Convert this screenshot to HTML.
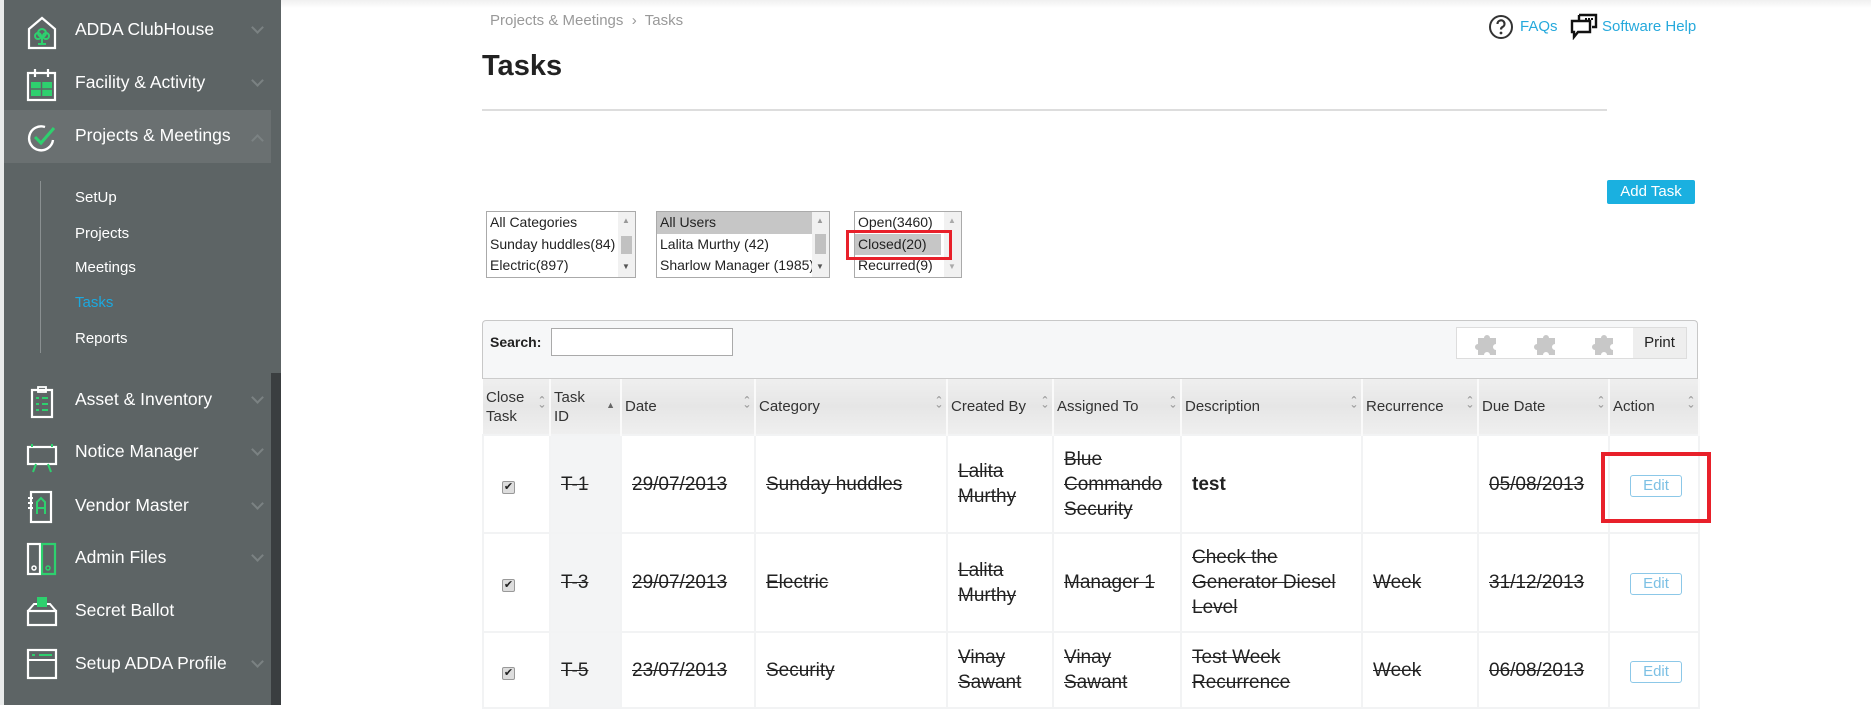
<!DOCTYPE html>
<html><head><meta charset="utf-8">
<style>
*{box-sizing:border-box;margin:0;padding:0}
body{width:1871px;height:705px;overflow:hidden;background:#fff;font-family:"Liberation Sans",sans-serif;position:relative}
.a{position:absolute}
#sb{left:0;top:0;width:281px;height:705px;background:#5d6465}
#strip{left:0;top:0;width:4px;height:705px;background:#e9ebeb}
.mi{position:absolute;left:75px;color:#fff;font-size:17.5px;white-space:nowrap}
.si{position:absolute;left:75px;color:#fff;font-size:15px}
.chev{position:absolute;left:253px;width:9px;height:9px;border-right:2px solid #7b8283;border-bottom:2px solid #7b8283;transform:rotate(45deg)}
.ic{position:absolute;left:26px}
.sel{position:absolute;border:1px solid #aaa;background:#fff;font-size:14px;color:#222;overflow:hidden}
.sel div.o{height:21.5px;line-height:21.5px;padding-left:3px;white-space:nowrap}
.scr{position:absolute;right:0;top:0;bottom:0;width:17px;background:#f1f1f1}
table{border-collapse:collapse;table-layout:fixed;position:absolute;left:482px;top:379px;width:1216px}
th{height:56px;background:linear-gradient(#efefef,#e6e6e6 50%,#efefef);font-weight:normal;text-align:left;font-size:15px;color:#333;padding:0 4px 0 3px;border-right:2px solid #fafafa;position:relative;line-height:19px}
th .s{position:absolute;right:5px;top:18px;color:#999;font-size:13px;line-height:9px;font-weight:bold}
td{border:2px solid #f2f3f4;font-size:19px;color:#222;text-decoration:line-through;padding:0 8px 0 10px;line-height:25px;vertical-align:middle}
td.id{background:#f3f4f5}
.edit{display:inline-block;width:52px;height:22px;border:1px solid #8cc8e8;border-radius:3px;color:#7cc0e4;font-size:15px;line-height:20px;text-align:center;text-decoration:none}
.cb{display:inline-block;width:13px;height:13px;border:1px solid #999;border-radius:2px;background:#ddd;font-size:11px;line-height:11px;text-align:center;text-decoration:none;color:#222}
</style></head><body>
<div id="sb" class="a"></div>
<div id="strip" class="a"></div>
<div class="a" style="left:4px;top:110px;width:267px;height:53px;background:#6a7071"></div>
<div class="a" style="left:271px;top:373px;width:10px;height:332px;background:#3a3e40"></div>
<div class="a" style="left:40px;top:181px;width:1px;height:172px;background:#8a9091"></div>

<svg class="ic" style="top:15px" width="32" height="36" viewBox="0 0 32 36"><path d="M3 14 L16 3 L29 14 V33 H3 Z" fill="none" stroke="#fff" stroke-width="2.2"/><circle cx="16" cy="18" r="4" fill="none" stroke="#2ed06e" stroke-width="2"/><circle cx="12" cy="21" r="3" fill="none" stroke="#2ed06e" stroke-width="2"/><circle cx="20" cy="21" r="3" fill="none" stroke="#2ed06e" stroke-width="2"/><path d="M16 22v6M12 29h8" stroke="#2ed06e" stroke-width="2"/></svg>
<svg class="ic" style="top:68px" width="32" height="34" viewBox="0 0 32 34"><rect x="2" y="5" width="27" height="27" fill="none" stroke="#fff" stroke-width="2.2"/><path d="M9 1v8M22 1v8" stroke="#fff" stroke-width="2.2"/><rect x="5" y="14" width="21" height="14" fill="#2ed06e"/><path d="M15.5 14v14M5 21h21" stroke="#5d6465" stroke-width="1.5"/></svg>
<svg class="ic" style="top:122px" width="32" height="32" viewBox="0 0 32 32"><path d="M27 18 A12 12 0 1 1 19 5" fill="none" stroke="#fff" stroke-width="2.4"/><path d="M9 15 L15 21 L28 6" fill="none" stroke="#2ed06e" stroke-width="3"/></svg>
<svg class="ic" style="top:385px" width="32" height="34" viewBox="0 0 32 34"><rect x="6" y="5" width="20" height="27" fill="none" stroke="#fff" stroke-width="2.2"/><rect x="12" y="2" width="8" height="5" fill="none" stroke="#fff" stroke-width="1.8"/><path d="M10 13h3M16 13h6M10 19h3M16 19h6M10 25h3M16 25h6" stroke="#2ed06e" stroke-width="2"/></svg>
<svg class="ic" style="top:442px" width="34" height="32" viewBox="0 0 34 32"><rect x="2" y="5" width="28" height="17" fill="none" stroke="#fff" stroke-width="2.2"/><path d="M6 2v3M26 2v3M10 22l-3 8M22 22l3 8" stroke="#2ed06e" stroke-width="2"/></svg>
<svg class="ic" style="top:490px" width="32" height="34" viewBox="0 0 32 34"><rect x="5" y="2" width="20" height="30" fill="none" stroke="#fff" stroke-width="2.2"/><path d="M2 8h5M2 13h5M2 18h5" stroke="#fff" stroke-width="2"/><path d="M11 24V12l4-4 4 4v12M11 18h8" fill="none" stroke="#2ed06e" stroke-width="2"/></svg>
<svg class="ic" style="top:542px" width="34" height="34" viewBox="0 0 34 34"><rect x="2" y="2" width="12" height="30" fill="none" stroke="#fff" stroke-width="2.2"/><circle cx="8" cy="26" r="2" fill="none" stroke="#fff" stroke-width="1.5"/><rect x="16" y="2" width="13" height="30" fill="none" stroke="#2ed06e" stroke-width="2.2"/><circle cx="22" cy="26" r="2" fill="none" stroke="#2ed06e" stroke-width="1.5"/></svg>
<svg class="ic" style="top:594px" width="32" height="34" viewBox="0 0 32 34"><rect x="2" y="17" width="28" height="14" fill="none" stroke="#fff" stroke-width="2.2"/><path d="M2 17l6-7h16l6 7" fill="none" stroke="#fff" stroke-width="2"/><rect x="11" y="3" width="10" height="10" fill="#2ed06e"/></svg>
<svg class="ic" style="top:647px" width="32" height="34" viewBox="0 0 32 34"><rect x="2" y="3" width="28" height="28" fill="none" stroke="#fff" stroke-width="2.2"/><path d="M2 13h28" stroke="#fff" stroke-width="2"/><path d="M6 8h3M13 8h13" stroke="#2ed06e" stroke-width="2"/></svg>

<div class="mi" style="top:19px">ADDA ClubHouse</div>
<div class="mi" style="top:72px">Facility &amp; Activity</div>
<div class="mi" style="top:125px">Projects &amp; Meetings</div>
<div class="si" style="top:189px">SetUp</div>
<div class="si" style="top:225px">Projects</div>
<div class="si" style="top:259px">Meetings</div>
<div class="si" style="top:294px;color:#1ba9e0">Tasks</div>
<div class="si" style="top:330px">Reports</div>
<div class="mi" style="top:389px">Asset &amp; Inventory</div>
<div class="mi" style="top:441px">Notice Manager</div>
<div class="mi" style="top:495px">Vendor Master</div>
<div class="mi" style="top:547px">Admin Files</div>
<div class="mi" style="top:600px">Secret Ballot</div>
<div class="mi" style="top:653px">Setup ADDA Profile</div>
<div class="chev" style="top:23px"></div>
<div class="chev" style="top:76px"></div>
<div class="chev" style="top:136px;transform:rotate(225deg)"></div>
<div class="chev" style="top:393px"></div>
<div class="chev" style="top:445px"></div>
<div class="chev" style="top:499px"></div>
<div class="chev" style="top:551px"></div>
<div class="chev" style="top:657px"></div>

<div class="a" style="left:281px;top:0;width:1590px;height:8px;background:linear-gradient(#f0f0f0,#fff)"></div>
<div class="a" style="left:490px;top:12px;font-size:15px;color:#999">Projects &amp; Meetings &nbsp;›&nbsp; Tasks</div>
<div class="a" style="left:482px;top:50px;font-size:29px;font-weight:bold;color:#222">Tasks</div>
<div class="a" style="left:482px;top:109px;width:1125px;height:2px;background:#ddd"></div>
<svg class="a" style="left:1488px;top:14px" width="26" height="26" viewBox="0 0 26 26"><circle cx="13" cy="13" r="11" fill="none" stroke="#333" stroke-width="2"/><path d="M9.5 10a3.5 3.5 0 1 1 5 3c-1.2.6-1.5 1.3-1.5 2.5" fill="none" stroke="#333" stroke-width="2.2"/><circle cx="13" cy="19" r="1.4" fill="#333"/></svg>
<div class="a" style="left:1520px;top:18px;font-size:15px;color:#26a9dc">FAQs</div>
<svg class="a" style="left:1570px;top:13px" width="28" height="27" viewBox="0 0 28 27"><path d="M9 2h17v12h-4M9 2v5" fill="none" stroke="#111" stroke-width="2.4"/><path d="M2 8h18v11H8l-4 5v-5H2z" fill="#fff" stroke="#111" stroke-width="2.4"/><path d="M15 6h2M18 6h2M21 6h2" stroke="#111" stroke-width="2"/></svg>
<div class="a" style="left:1602px;top:18px;font-size:15px;color:#26a9dc">Software Help</div>
<div class="a" style="left:1607px;top:180px;width:88px;height:24px;background:#1ab0e0;border-radius:2px;color:#fff;font-size:15px;line-height:24px;text-align:center">Add Task</div>

<div class="sel" style="left:486px;top:211px;width:150px;height:67px">
<div class="o">All Categories</div><div class="o">Sunday huddles(84)</div><div class="o">Electric(897)</div>
<div class="scr"><div style="position:absolute;left:3px;top:24px;width:11px;height:18px;background:#c1c1c1"></div><div style="position:absolute;left:4px;top:4px;font-size:8px;color:#999">▲</div><div style="position:absolute;left:4px;top:50px;font-size:8px;color:#555">▼</div></div></div>
<div class="sel" style="left:656px;top:211px;width:174px;height:67px">
<div class="o" style="background:#c6c6c6;margin-right:17px">All Users</div><div class="o">Lalita Murthy (42)</div><div class="o">Sharlow Manager (1985)</div>
<div class="scr"><div style="position:absolute;left:3px;top:22px;width:11px;height:20px;background:#c1c1c1"></div><div style="position:absolute;left:4px;top:4px;font-size:8px;color:#999">▲</div><div style="position:absolute;left:4px;top:50px;font-size:8px;color:#555">▼</div></div></div>
<div class="sel" style="left:854px;top:211px;width:108px;height:67px">
<div class="o">Open(3460)</div><div class="o" style="background:#c6c6c6;margin-right:20px">Closed(20)</div><div class="o">Recurred(9)</div>
<div class="scr"><div style="position:absolute;left:4px;top:4px;font-size:8px;color:#aaa">▲</div><div style="position:absolute;left:4px;top:50px;font-size:8px;color:#aaa">▼</div></div></div>
<div class="a" style="left:846px;top:230px;width:106px;height:30px;border:3px solid #e8202a"></div>

<div class="a" style="left:482px;top:320px;width:1216px;height:59px;background:#f6f7f8;border:1px solid #c8c8c8;border-bottom:1px solid #ccc;border-radius:4px 4px 0 0"></div>
<div class="a" style="left:490px;top:334px;font-size:14px;font-weight:bold;color:#222">Search:</div>
<div class="a" style="left:551px;top:328px;width:182px;height:28px;border:1px solid #aaa;background:#fff"></div>
<div class="a" style="left:1456px;top:327px;width:231px;height:32px;background:#fff;border:1px solid #ddd"></div>
<svg class="a" style="left:1474px;top:332px" width="200" height="24" viewBox="0 0 200 24"><g fill="#c8c8c8"><path id="pz" d="M4 6h6a3 3 0 1 1 6 0h6v6a3 3 0 1 0 0 6v5h-6a3 3 0 1 0-6 0H4v-5a3 3 0 1 1 0-6z"/><use href="#pz" x="59"/><use href="#pz" x="117"/></g></svg>
<div class="a" style="left:1633px;top:328px;width:53px;height:30px;background:#eee;font-size:15px;color:#222;line-height:30px;text-align:center">Print</div>

<table>
<colgroup><col style="width:67px"><col style="width:71px"><col style="width:134px"><col style="width:192px"><col style="width:106px"><col style="width:128px"><col style="width:181px"><col style="width:116px"><col style="width:131px"><col style="width:90px"></colgroup>
<tr><th>Close<br>Task<span class="s">ˆ<br>ˇ</span></th><th>Task<br>ID<span class="s" style="color:#666;top:22px;font-size:9px">▲</span></th><th>Date<span class="s">ˆ<br>ˇ</span></th><th>Category<span class="s">ˆ<br>ˇ</span></th><th>Created By<span class="s">ˆ<br>ˇ</span></th><th>Assigned To<span class="s">ˆ<br>ˇ</span></th><th>Description<span class="s">ˆ<br>ˇ</span></th><th>Recurrence<span class="s">ˆ<br>ˇ</span></th><th>Due Date<span class="s">ˆ<br>ˇ</span></th><th>Action<span class="s">ˆ<br>ˇ</span></th></tr>
<tr style="height:98px"><td style="padding-left:18px"><span class="cb">✔</span></td><td class="id">T-1</td><td>29/07/2013</td><td>Sunday huddles</td><td>Lalita Murthy</td><td>Blue Commando Security</td><td style="text-decoration:none;font-weight:bold">test</td><td></td><td>05/08/2013</td><td style="padding-left:20px"><span class="edit">Edit</span></td></tr>
<tr style="height:99px"><td style="padding-left:18px"><span class="cb">✔</span></td><td class="id">T-3</td><td>29/07/2013</td><td>Electric</td><td>Lalita Murthy</td><td>Manager 1</td><td>Check the Generator Diesel Level</td><td>Week</td><td>31/12/2013</td><td style="padding-left:20px"><span class="edit">Edit</span></td></tr>
<tr style="height:76px"><td style="padding-left:18px"><span class="cb">✔</span></td><td class="id">T-5</td><td>23/07/2013</td><td>Security</td><td>Vinay Sawant</td><td>Vinay Sawant</td><td>Test Week Recurrence</td><td>Week</td><td>06/08/2013</td><td style="padding-left:20px"><span class="edit">Edit</span></td></tr>
</table>
<div class="a" style="left:1601px;top:452px;width:110px;height:71px;border:4px solid #e8202a"></div>
</body></html>
